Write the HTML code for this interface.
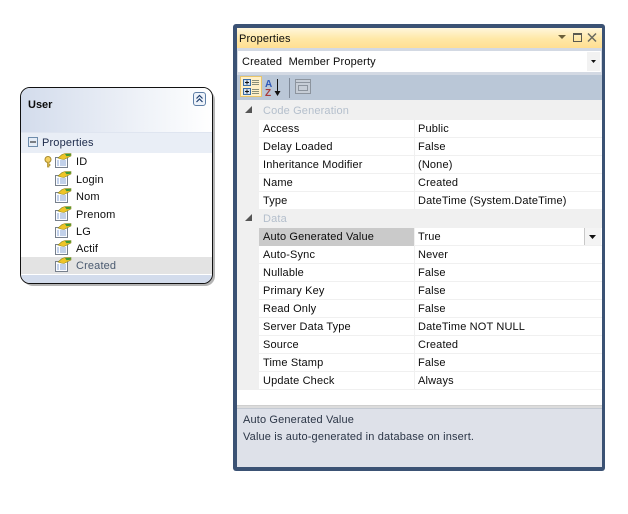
<!DOCTYPE html>
<html><head><meta charset="utf-8">
<style>
html,body{margin:0;padding:0;background:#fff;}
body{width:628px;height:514px;position:relative;overflow:hidden;font-family:"Liberation Sans",sans-serif;font-size:11px;color:#0c0c0c;}
.a{position:absolute;}
.t{position:absolute;white-space:nowrap;line-height:14px;height:14px;letter-spacing:.15px;margin-top:1px;}
.row{position:absolute;left:259px;width:343px;height:17px;background:#fff;border-bottom:1px solid #f0f0f0;}
.row i{position:absolute;left:155px;top:0;width:1px;height:17px;background:#f0f0f0;}
.ic{position:absolute;width:17px;height:15px;}
</style></head><body>
<svg width="0" height="0" style="position:absolute"><defs>
<g id="p">
<path d="M0.500 4.500H12.500V14.500H0.500Z" fill="#fbfcff" stroke="#77808c"/>
<path d="M2 8H4M5 8H11M2 10H4M5 10H11M2 12H4M5 12H11" stroke="#8aa6d6"/>
<path d="M3 5L7 1.500L10 0.500L16 0.500L16 3L12 5L9 6.500L6 6Z" fill="#eec428" stroke="#8a8420" stroke-width=".6"/>
<path d="M10 1L16 .8L15.500 2.800L11.500 3.200Z" fill="#3f9a35"/>
</g></defs></svg>

<!-- Entity -->
<div class="a" style="left:23px;top:90px;width:192px;height:196px;border-radius:10px;background:#b4b4b4;"></div>
<div class="a" style="left:20px;top:87px;width:191px;height:195px;border:1px solid #111;border-radius:10px;background:#fff;overflow:hidden;">
  <div class="a" style="left:0;top:0;width:191px;height:44px;background:linear-gradient(90deg,#d3dcec,#fff);"></div>
  <div class="a" style="left:0;top:44px;width:191px;height:21px;background:#e9eef6;border-top:1px solid #dfe5f0;box-sizing:border-box;"></div>
  <div class="a" style="left:0;top:169px;width:191px;height:17px;background:#e3e3e3;"></div>
  <div class="a" style="left:0;top:187px;width:191px;height:8px;background:#d3dcec;"></div>
</div>
<div class="t" style="left:28px;top:97px;font-weight:bold;letter-spacing:0;">User</div>
<svg class="a" style="left:193px;top:92px" width="13" height="14"><rect x=".5" y=".5" width="12" height="13" rx="2.500" fill="#eef3fa" stroke="#5f7fa6"/><path d="M3.500 6.500L6.500 3.500L9.500 6.500M3.500 10L6.500 7L9.500 10" fill="none" stroke="#1f3f70" stroke-width="1.200"/></svg>
<svg class="a" style="left:28px;top:137px" width="10" height="10"><rect x=".5" y=".5" width="9" height="9" fill="#e4ecf6" stroke="#6e8cab"/><path d="M2 5H8" stroke="#111"/></svg>
<div class="t" style="left:42px;top:135px;color:#1c2a4a;">Properties</div>
<svg class="a" style="left:44px;top:156px" width="8" height="12"><circle cx="4" cy="3.500" r="3" fill="#f4d060" stroke="#a68a2a"/><path d="M3.500 6V11H5V9.500H6V8.500H5V6" fill="#e6c050" stroke="#a68a2a" stroke-width=".7"/></svg>
<svg class="ic" style="left:55px;top:153px"><use href="#p"/></svg>
<svg class="ic" style="left:55px;top:171px"><use href="#p"/></svg>
<svg class="ic" style="left:55px;top:188px"><use href="#p"/></svg>
<svg class="ic" style="left:55px;top:206px"><use href="#p"/></svg>
<svg class="ic" style="left:55px;top:223px"><use href="#p"/></svg>
<svg class="ic" style="left:55px;top:240px"><use href="#p"/></svg>
<svg class="ic" style="left:55px;top:257px"><use href="#p"/></svg>
<div class="t" style="left:76px;top:154px;">ID</div>
<div class="t" style="left:76px;top:172px;">Login</div>
<div class="t" style="left:76px;top:189px;">Nom</div>
<div class="t" style="left:76px;top:207px;">Prenom</div>
<div class="t" style="left:76px;top:224px;">LG</div>
<div class="t" style="left:76px;top:241px;">Actif</div>
<div class="t" style="left:76px;top:258px;color:#4a5a70;">Created</div>

<!-- Panel -->
<div class="a" style="left:233px;top:24px;width:372px;height:447px;background:#3b5274;border-radius:3px;"></div>
<div class="a" style="left:237px;top:28px;width:365px;height:439px;background:#d3d9e3;"></div>
<div class="a" style="left:237px;top:28px;width:365px;height:20px;background:linear-gradient(#fff6dc,#ffe8a6 55%,#ffdf92);"></div>
<div class="t" style="left:239px;top:31px;">Properties</div>
<svg class="a" style="left:557px;top:32px" width="44" height="12"><path d="M1 3H9L5 7Z" fill="#6b5f3a"/><rect x="16.500" y="1.500" width="8" height="8" fill="none" stroke="#5a5a50"/><path d="M16 2H25" stroke="#5a5a50" stroke-width="2"/><path d="M31 1.500L39 9.500M39 1.500L31 9.500" stroke="#6a6a60" stroke-width="1.500"/></svg>

<div class="a" style="left:238px;top:51px;width:363px;height:21px;background:#fff;"></div>
<div class="t" style="left:242px;top:54px;">Created&nbsp; Member Property</div>
<div class="a" style="left:587px;top:52px;width:13px;height:19px;background:#f2f2f2;"></div>
<svg class="a" style="left:590px;top:59px" width="7" height="5"><path d="M1 1H6L3.500 4Z" fill="#111"/></svg>

<div class="a" style="left:237px;top:75px;width:365px;height:25px;background:#bac7d7;"></div>
<div class="a" style="left:240px;top:76px;width:22px;height:21px;background:#fff0c8;border:1px solid #e8c56c;box-sizing:border-box;"></div>
<svg class="a" style="left:243px;top:79px" width="18" height="16">
<rect x=".5" y=".5" width="7" height="6" fill="#cfe0f4" stroke="#3a6ea8"/><rect x=".5" y="9.500" width="7" height="6" fill="#cfe0f4" stroke="#3a6ea8"/>
<path d="M2 3.500H6M4 1.500V5.500M2 12.500H6M4 10.500V14.500" stroke="#111"/>
<path d="M9 1.500H16M9 3.500H16M9 5.500H16M9 10.500H16M9 12.500H16M9 14.500H16" stroke="#8a8f78"/></svg>
<svg class="a" style="left:264px;top:78px" width="20" height="20">
<text x="1" y="9" font-family="Liberation Sans" font-size="10" font-weight="bold" fill="#2f58b8">A</text>
<text x="1" y="18" font-family="Liberation Sans" font-size="10" font-weight="bold" fill="#a83a3a">Z</text>
<path d="M13.500 1V14" stroke="#111"/><path d="M10.500 13H16.500L13.500 18Z" fill="#111"/></svg>
<div class="a" style="left:289px;top:78px;width:1px;height:20px;background:#7f8a99;"></div>
<svg class="a" style="left:295px;top:79px" width="16" height="15"><rect x=".5" y=".5" width="15" height="14" fill="#c6cdd6" stroke="#8c949e"/><path d="M1 3.500H15" stroke="#8c949e"/><rect x="3.500" y="6.500" width="9" height="5" fill="none" stroke="#8c949e"/></svg>

<div class="a" style="left:237px;top:100px;width:365px;height:290px;background:#f0f0f0;"></div>
<div class="a" style="left:237px;top:390px;width:365px;height:15px;background:#fff;"></div>
<div class="a" style="left:237px;top:405px;width:365px;height:4px;background:#dcdcdc;border-top:1px solid #cfcfcf;border-bottom:1px solid #c4cad3;box-sizing:border-box;"></div>
<div class="a" style="left:237px;top:409px;width:365px;height:58px;background:#dee1e9;"></div>

<svg class="a" style="left:245px;top:106px" width="7" height="7"><path d="M7 0V7H0Z" fill="#555"/></svg>
<div class="t" style="left:263px;top:103px;color:#b4bfcc;">Code Generation</div>
<svg class="a" style="left:245px;top:214px" width="7" height="7"><path d="M7 0V7H0Z" fill="#555"/></svg>
<div class="t" style="left:263px;top:211px;color:#b4bfcc;">Data</div>

<div class="row" style="top:120px"><i></i></div>
<div class="row" style="top:138px"><i></i></div>
<div class="row" style="top:156px"><i></i></div>
<div class="row" style="top:174px"><i></i></div>
<div class="row" style="top:192px"><i></i></div>
<div class="row" style="top:228px"><i></i></div>
<div class="row" style="top:246px"><i></i></div>
<div class="row" style="top:264px"><i></i></div>
<div class="row" style="top:282px"><i></i></div>
<div class="row" style="top:300px"><i></i></div>
<div class="row" style="top:318px"><i></i></div>
<div class="row" style="top:336px"><i></i></div>
<div class="row" style="top:354px"><i></i></div>
<div class="row" style="top:372px"><i></i></div>
<div class="a" style="left:259px;top:228px;width:155px;height:18px;background:#cacaca;"></div>
<div class="a" style="left:584px;top:228px;width:1px;height:17px;background:#c8c8c8;"></div>
<div class="a" style="left:585px;top:228px;width:16px;height:17px;background:#f4f4f4;"></div>
<svg class="a" style="left:588px;top:234px" width="9" height="6"><path d="M1 1H8L4.500 5Z" fill="#111"/></svg>

<div class="t" style="left:263px;top:121px;">Access</div><div class="t" style="left:418px;top:121px;">Public</div>
<div class="t" style="left:263px;top:139px;">Delay Loaded</div><div class="t" style="left:418px;top:139px;">False</div>
<div class="t" style="left:263px;top:157px;">Inheritance Modifier</div><div class="t" style="left:418px;top:157px;">(None)</div>
<div class="t" style="left:263px;top:175px;">Name</div><div class="t" style="left:418px;top:175px;">Created</div>
<div class="t" style="left:263px;top:193px;">Type</div><div class="t" style="left:418px;top:193px;">DateTime (System.DateTime)</div>
<div class="t" style="left:263px;top:229px;">Auto Generated Value</div><div class="t" style="left:418px;top:229px;">True</div>
<div class="t" style="left:263px;top:247px;">Auto-Sync</div><div class="t" style="left:418px;top:247px;">Never</div>
<div class="t" style="left:263px;top:265px;">Nullable</div><div class="t" style="left:418px;top:265px;">False</div>
<div class="t" style="left:263px;top:283px;">Primary Key</div><div class="t" style="left:418px;top:283px;">False</div>
<div class="t" style="left:263px;top:301px;">Read Only</div><div class="t" style="left:418px;top:301px;">False</div>
<div class="t" style="left:263px;top:319px;">Server Data Type</div><div class="t" style="left:418px;top:319px;">DateTime NOT NULL</div>
<div class="t" style="left:263px;top:337px;">Source</div><div class="t" style="left:418px;top:337px;">Created</div>
<div class="t" style="left:263px;top:355px;">Time Stamp</div><div class="t" style="left:418px;top:355px;">False</div>
<div class="t" style="left:263px;top:373px;">Update Check</div><div class="t" style="left:418px;top:373px;">Always</div>

<div class="t" style="left:243px;top:412px;color:#2b3546;">Auto Generated Value</div>
<div class="t" style="left:243px;top:429px;color:#2b3546;">Value is auto-generated in database on insert.</div>
</body></html>
